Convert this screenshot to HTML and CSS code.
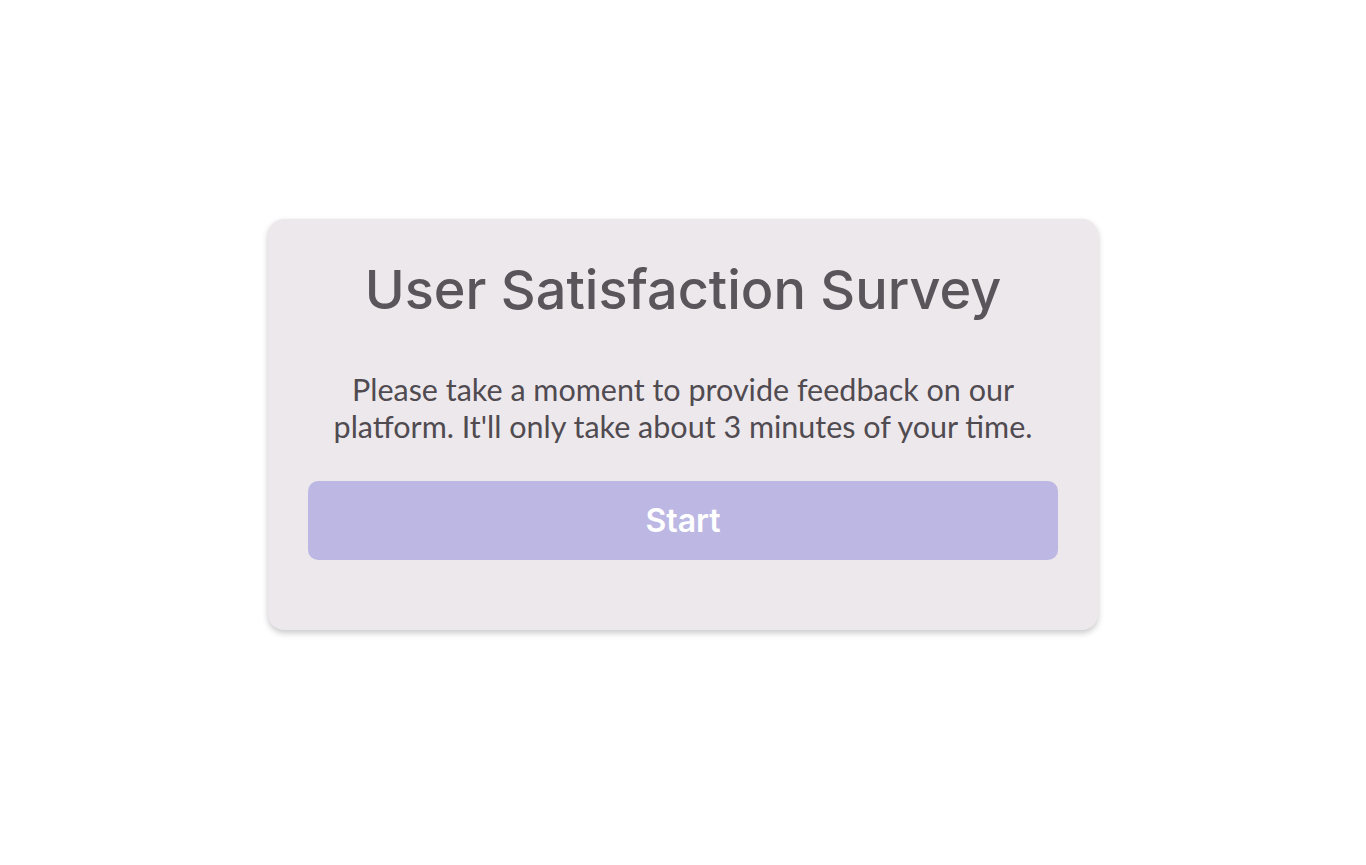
FILE: index.html
```html
<!DOCTYPE html>
<html lang="en">
<head>
<meta charset="utf-8">
<title>User Satisfaction Survey</title>
<link rel="stylesheet" href="styles.css">
</head>
<body>
<main class="page">
  <section class="card">
    <h1 class="title">User Satisfaction Survey</h1>
    <p class="intro">Please take a moment to provide feedback on our platform. It'll only take about 3 minutes of your time.</p>
    <button class="start" type="button">Start</button>
  </section>
</main>
</body>
</html>
```

FILE: styles.css
```css
html, body {
  margin: 0;
  padding: 0;
  background: #ffffff;
}

.page {
  height: 865px;
  display: flex;
  align-items: center;
  justify-content: center;
  padding-bottom: 16px;
  box-sizing: border-box;
}

.card {
  width: 830px;
  box-sizing: border-box;
  padding: 38px 40px 70px;
  background: #ede8ec;
  border-radius: 16px;
  box-shadow: 0 3px 6px rgba(0, 0, 0, 0.22);
  display: flex;
  flex-direction: column;
  align-items: stretch;
}

.title {
  margin: 0;
  font-family: "Inter", "Open Sans", sans-serif;
  font-weight: 500;
  font-size: 54px;
  line-height: 66px;
  color: #59555a;
  text-align: center;
}

.intro {
  margin: 48px auto 0;
  max-width: 712px;
  font-family: "Lato", sans-serif;
  font-size: 30.5px;
  line-height: 37px;
  color: #504b51;
  text-align: center;
}

.start {
  margin-top: 36px;
  height: 79px;
  border: none;
  border-radius: 10px;
  background: #bcb8e3;
  color: #ffffff;
  font-family: "Inter", "Open Sans", sans-serif;
  font-weight: 600;
  font-size: 32px;
  cursor: pointer;
}
```
